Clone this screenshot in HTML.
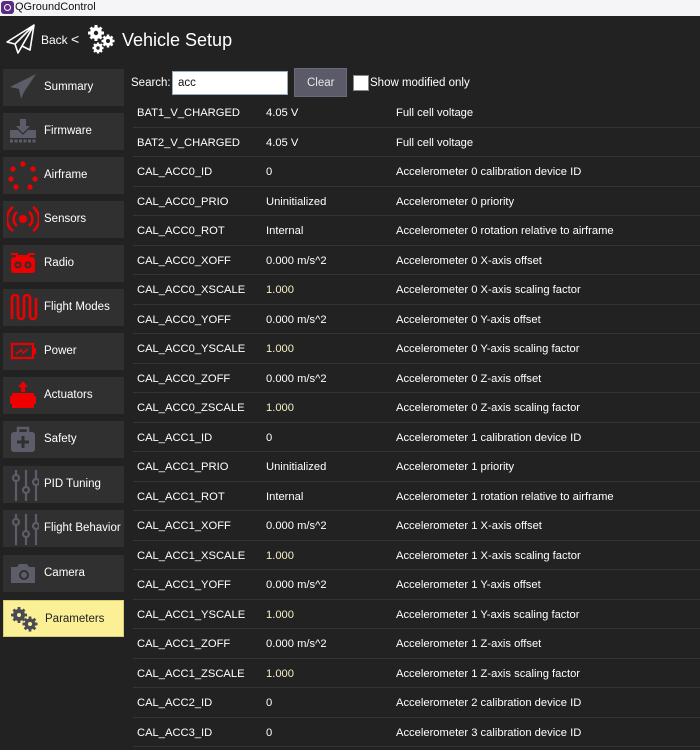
<!DOCTYPE html>
<html><head><meta charset="utf-8"><style>
*{margin:0;padding:0;box-sizing:border-box}
body{width:700px;height:750px;background:#222;font-family:"Liberation Sans",sans-serif;color:#fff;position:relative;overflow:hidden}
.a{position:absolute}
.btn{position:absolute;left:3px;width:121px;height:37px;background:#303030}
.btn span{position:absolute;left:41px;top:12px;font-size:11.5px;color:#fff;white-space:nowrap}
.btn svg{position:absolute;left:4px;top:3px}
.row{position:absolute;left:133px;width:567px;height:29.5px;border-bottom:1px solid #343434;font-size:11.2px}
.row div{position:absolute;top:9px;white-space:nowrap}
.c1{left:4px}.c2{left:133px}.c3{left:263px}
.y{color:#f4f0c4}
</style></head><body>
<div class="a" style="left:0;top:0;width:700px;height:16px;background:#f5f5f7"></div>
<div class="a" style="left:1px;top:1px;width:13px;height:13px;background:#5a2d82;border-radius:3px"></div>
<div class="a" style="left:4px;top:4px;width:7px;height:7px;border:1.5px solid #fff;border-radius:50%"></div>
<div class="a" style="left:15px;top:1px;font-size:11px;color:#111">QGroundControl</div>

<svg class="a" style="left:5px;top:23px" width="31" height="32" viewBox="0 0 31 32"><path d="M29 2 L2 19 L10 21 L13 30 L17 23 L25 27 Z M29 2 L10 21 M29 2 L13 30" fill="none" stroke="#fff" stroke-width="1.6" stroke-linejoin="round"/></svg>
<div class="a" style="left:41px;top:33px;font-size:12px">Back</div>
<div class="a" style="left:71px;top:31px;font-size:14px">&lt;</div>
<svg class="a" style="left:86px;top:24px" width="30" height="30" viewBox="0 0 30 30">
<g fill="#fff"><circle cx="10" cy="9" r="6"/><circle cx="22" cy="17" r="5"/><circle cx="12" cy="24" r="4.5"/></g>
<g stroke="#fff" stroke-width="3"><path d="M10 1v16M2 9h16M4.5 3.5l11 11M15.5 3.5l-11 11"/><path d="M22 10.5v13M15.5 17h13M17.5 12.5l9 9M26.5 12.5l-9 9" stroke-width="2.5"/><path d="M12 18.5v11M6.5 24h11M8 20l8 8M16 20l-8 8" stroke-width="2.2"/></g>
<g fill="#222"><circle cx="10" cy="9" r="2.2"/><circle cx="22" cy="17" r="2"/><circle cx="12" cy="24" r="1.7"/></g></svg>
<div class="a" style="left:122px;top:30px;font-size:18px">Vehicle Setup</div>

<div class="btn" style="top:69px"><svg width="32" height="30" viewBox="0 0 32 30"><path d="M29 2 L3 15 L12 17 L14 27 L17 20 Z" fill="#5d5d6a"/></svg><span>Summary</span></div>
<div class="btn" style="top:113px"><svg width="32" height="30" viewBox="0 0 32 30"><path d="M13 3h6v7h4l-7 7-7-7h4z" fill="#5d5d6a"/><path d="M3 14h8l5 5 5-5h8v8H3z" fill="#5d5d6a"/><path d="M3 25h26" stroke="#5d5d6a" stroke-width="3" stroke-dasharray="3 1.5"/></svg><span>Firmware</span></div>
<div class="btn" style="top:157px"><svg width="32" height="30" viewBox="0 0 32 30"><g fill="#e00"><circle cx="16" cy="4" r="2.6"/><circle cx="6" cy="9" r="2.6"/><circle cx="26" cy="9" r="2.6"/><circle cx="4" cy="19" r="2.6"/><circle cx="28" cy="19" r="2.6"/><circle cx="9" cy="27" r="2.6"/><circle cx="23" cy="27" r="2.6"/></g></svg><span>Airframe</span></div>
<div class="btn" style="top:201px"><svg width="32" height="30" viewBox="0 0 32 30"><g fill="none" stroke="#e00" stroke-width="2.5"><path d="M10 8a9 9 0 0 0 0 14M22 8a9 9 0 0 1 0 14M6 3a15 15 0 0 0 0 24M26 3a15 15 0 0 1 0 24"/></g><circle cx="16" cy="15" r="4" fill="#e00"/></svg><span>Sensors</span></div>
<div class="btn" style="top:245px"><svg width="32" height="30" viewBox="0 0 32 30"><path d="M4 6h6v2h12V6h6" stroke="#e00" stroke-width="2" fill="none"/><rect x="4" y="9" width="24" height="16" rx="3" fill="#e00"/><circle cx="11" cy="17" r="3.5" fill="#303030"/><circle cx="21" cy="17" r="3.5" fill="#303030"/><circle cx="11" cy="17" r="1.5" fill="#e00"/><circle cx="21" cy="17" r="1.5" fill="#e00"/></svg><span>Radio</span></div>
<div class="btn" style="top:289px"><svg width="32" height="30" viewBox="0 0 32 30"><path d="M5 27V6a3 3 0 0 1 6 0v18a3 3 0 0 0 6 0V6a3 3 0 0 1 6 0v18a3 3 0 0 0 6 0V6" fill="none" stroke="#e00" stroke-width="2.6"/></svg><span>Flight Modes</span></div>
<div class="btn" style="top:333px"><svg width="32" height="30" viewBox="0 0 32 30"><rect x="5" y="8" width="21" height="14" fill="none" stroke="#e00" stroke-width="2.2"/><rect x="26" y="12" width="3" height="6" fill="#e00"/><path d="M9 18l5-4 2 3 5-4" fill="none" stroke="#e00" stroke-width="1.5"/></svg><span>Power</span></div>
<div class="btn" style="top:377px"><svg width="32" height="30" viewBox="0 0 32 30"><path d="M16 1l-5 6h3v5h4V7h3z" fill="#e00"/><path d="M5 13h22v3h2v8h-2v4H5v-4H3v-8h2z" fill="#e00"/></svg><span>Actuators</span></div>
<div class="btn" style="top:421px"><svg width="32" height="30" viewBox="0 0 32 30"><path d="M11 8V4h10v4" fill="none" stroke="#5d5d6a" stroke-width="2.5"/><rect x="4" y="8" width="24" height="20" rx="3" fill="#5d5d6a"/><path d="M16 12v12M10 18h12" stroke="#303030" stroke-width="3"/></svg><span>Safety</span></div>
<div class="btn" style="top:466px"><svg width="32" height="32" viewBox="0 0 32 32"><g stroke="#5d5d6a" stroke-width="2.2" fill="#303030"><path d="M9 1v31M19 1v31M29 1v31"/><circle cx="9" cy="9" r="3"/><circle cx="19" cy="21" r="3"/><circle cx="29" cy="13" r="3"/></g></svg><span>PID Tuning</span></div>
<div class="btn" style="top:510px"><svg width="32" height="32" viewBox="0 0 32 32"><g stroke="#5d5d6a" stroke-width="2.2" fill="#303030"><path d="M9 1v31M19 1v31M29 1v31"/><circle cx="9" cy="9" r="3"/><circle cx="19" cy="21" r="3"/><circle cx="29" cy="13" r="3"/></g></svg><span>Flight Behavior</span></div>
<div class="btn" style="top:555px"><svg width="32" height="30" viewBox="0 0 32 30"><path d="M4 9h6l2-3h8l2 3h6v16H4z" fill="#5d5d6a"/><circle cx="17" cy="17" r="5" fill="#303030"/><circle cx="17" cy="17" r="3" fill="#5d5d6a"/></svg><span>Camera</span></div>
<div class="btn" style="top:600px;background:#fbf096;border:1px solid #d9cf7a"><svg width="32" height="30" viewBox="0 0 32 30"><g fill="#4a4a55"><circle cx="11" cy="11" r="6"/><circle cx="22" cy="20" r="5.5"/></g><g stroke="#4a4a55" stroke-width="2.8"><path d="M11 3v16M3 11h16M5.5 5.5l11 11M16.5 5.5l-11 11M22 12.5v15M14.5 20h15M16.7 14.7l10.6 10.6M27.3 14.7l-10.6 10.6"/></g><g fill="#fbf096"><circle cx="11" cy="11" r="2"/><circle cx="22" cy="20" r="2"/></g></svg><span style="color:#222">Parameters</span></div>

<div class="a" style="left:131px;top:77px;font-size:11.5px">Search:</div>
<div class="a" style="left:172px;top:71px;width:116px;height:24px;background:#fff;border:1px solid #9ab"></div>
<div class="a" style="left:178px;top:77px;font-size:11.5px;color:#111">acc</div>
<div class="a" style="left:294px;top:68px;width:53px;height:29px;background:#5a5a68;border:1px solid #6a6a78"></div>
<div class="a" style="left:307px;top:77px;font-size:11.5px;color:#e8e8e8">Clear</div>
<div class="a" style="left:353px;top:75px;width:16px;height:16px;background:#fff;border:1px solid #888"></div>
<div class="a" style="left:370px;top:77px;font-size:11.5px">Show modified only</div>

<div class="row" style="top:98px"><div class="c1">BAT1_V_CHARGED</div><div class="c2">4.05 V</div><div class="c3">Full cell voltage</div></div>
<div class="row" style="top:127.5px"><div class="c1">BAT2_V_CHARGED</div><div class="c2">4.05 V</div><div class="c3">Full cell voltage</div></div>
<div class="row" style="top:157px"><div class="c1">CAL_ACC0_ID</div><div class="c2">0</div><div class="c3">Accelerometer 0 calibration device ID</div></div>
<div class="row" style="top:186.5px"><div class="c1">CAL_ACC0_PRIO</div><div class="c2">Uninitialized</div><div class="c3">Accelerometer 0 priority</div></div>
<div class="row" style="top:216px"><div class="c1">CAL_ACC0_ROT</div><div class="c2">Internal</div><div class="c3">Accelerometer 0 rotation relative to airframe</div></div>
<div class="row" style="top:245.5px"><div class="c1">CAL_ACC0_XOFF</div><div class="c2">0.000 m/s^2</div><div class="c3">Accelerometer 0 X-axis offset</div></div>
<div class="row" style="top:275px"><div class="c1">CAL_ACC0_XSCALE</div><div class="c2 y">1.000</div><div class="c3">Accelerometer 0 X-axis scaling factor</div></div>
<div class="row" style="top:304.5px"><div class="c1">CAL_ACC0_YOFF</div><div class="c2">0.000 m/s^2</div><div class="c3">Accelerometer 0 Y-axis offset</div></div>
<div class="row" style="top:334px"><div class="c1">CAL_ACC0_YSCALE</div><div class="c2 y">1.000</div><div class="c3">Accelerometer 0 Y-axis scaling factor</div></div>
<div class="row" style="top:363.5px"><div class="c1">CAL_ACC0_ZOFF</div><div class="c2">0.000 m/s^2</div><div class="c3">Accelerometer 0 Z-axis offset</div></div>
<div class="row" style="top:393px"><div class="c1">CAL_ACC0_ZSCALE</div><div class="c2 y">1.000</div><div class="c3">Accelerometer 0 Z-axis scaling factor</div></div>
<div class="row" style="top:422.5px"><div class="c1">CAL_ACC1_ID</div><div class="c2">0</div><div class="c3">Accelerometer 1 calibration device ID</div></div>
<div class="row" style="top:452px"><div class="c1">CAL_ACC1_PRIO</div><div class="c2">Uninitialized</div><div class="c3">Accelerometer 1 priority</div></div>
<div class="row" style="top:481.5px"><div class="c1">CAL_ACC1_ROT</div><div class="c2">Internal</div><div class="c3">Accelerometer 1 rotation relative to airframe</div></div>
<div class="row" style="top:511px"><div class="c1">CAL_ACC1_XOFF</div><div class="c2">0.000 m/s^2</div><div class="c3">Accelerometer 1 X-axis offset</div></div>
<div class="row" style="top:540.5px"><div class="c1">CAL_ACC1_XSCALE</div><div class="c2 y">1.000</div><div class="c3">Accelerometer 1 X-axis scaling factor</div></div>
<div class="row" style="top:570px"><div class="c1">CAL_ACC1_YOFF</div><div class="c2">0.000 m/s^2</div><div class="c3">Accelerometer 1 Y-axis offset</div></div>
<div class="row" style="top:599.5px"><div class="c1">CAL_ACC1_YSCALE</div><div class="c2 y">1.000</div><div class="c3">Accelerometer 1 Y-axis scaling factor</div></div>
<div class="row" style="top:629px"><div class="c1">CAL_ACC1_ZOFF</div><div class="c2">0.000 m/s^2</div><div class="c3">Accelerometer 1 Z-axis offset</div></div>
<div class="row" style="top:658.5px"><div class="c1">CAL_ACC1_ZSCALE</div><div class="c2 y">1.000</div><div class="c3">Accelerometer 1 Z-axis scaling factor</div></div>
<div class="row" style="top:688px"><div class="c1">CAL_ACC2_ID</div><div class="c2">0</div><div class="c3">Accelerometer 2 calibration device ID</div></div>
<div class="row" style="top:717.5px"><div class="c1">CAL_ACC3_ID</div><div class="c2">0</div><div class="c3">Accelerometer 3 calibration device ID</div></div>
</body></html>
